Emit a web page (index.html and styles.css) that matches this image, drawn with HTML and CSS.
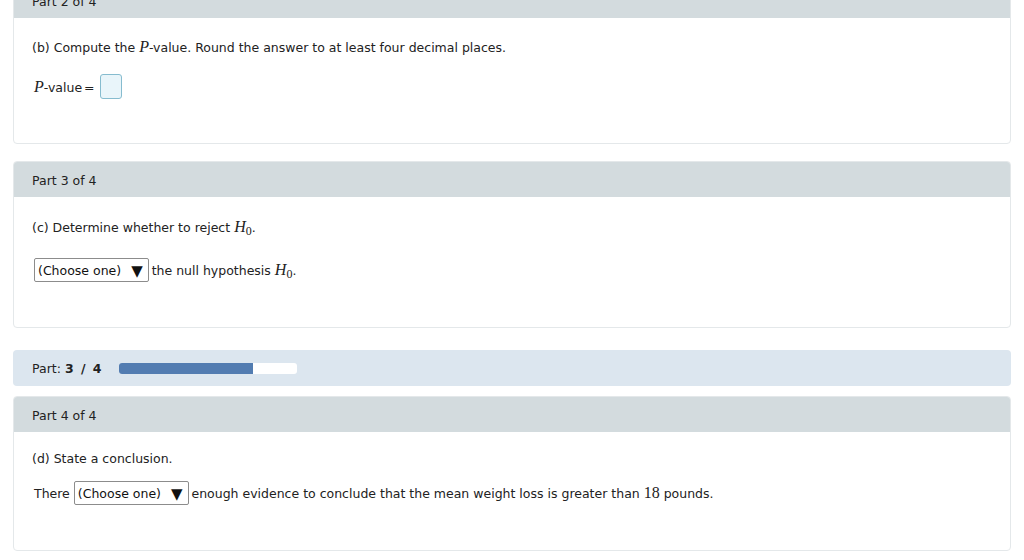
FILE: index.html
```html
<!DOCTYPE html>
<html>
<head>
<meta charset="utf-8">
<link rel="stylesheet" href="styles.css">
</head>
<body>
<div class="page">
  <section class="card card-b">
    <div class="card-head">Part 2 of 4</div>
    <div class="card-body">
      <p class="line">(b) Compute the <i class="m">P</i>-value. Round the answer to at least four decimal places.</p>
      <div class="answer-row">
        <span class="lbl"><i class="m">P</i>-value<span class="eq">=</span></span>
        <span class="input-box"></span>
      </div>
    </div>
  </section>

  <section class="card card-c">
    <div class="card-head">Part 3 of 4</div>
    <div class="card-body">
      <p class="line">(c) Determine whether to reject <i class="m">H</i><sub class="s">0</sub>.</p>
      <div class="answer-row">
        <span class="select">(Choose one)<span class="arrow">&#9660;</span></span>
        <span class="after">the null hypothesis <i class="m">H</i><sub class="s">0</sub>.</span>
      </div>
    </div>
  </section>

  <div class="progress">
    <span class="plabel">Part: <b>3 / 4</b></span>
    <span class="track"><span class="fill" style="width:75%"></span></span>
  </div>

  <section class="card card-d">
    <div class="card-head">Part 4 of 4</div>
    <div class="card-body">
      <p class="line">(d) State a conclusion.</p>
      <div class="answer-row">
        <span>There</span>
        <span class="select">(Choose one)<span class="arrow">&#9660;</span></span>
        <span class="after">enough evidence to conclude that the mean weight loss is greater than <span class="num">18</span> pounds.</span>
      </div>
    </div>
  </section>
</div>
</body>
</html>
```

FILE: styles.css
```css
html, body {
  margin: 0;
  padding: 0;
  background: #ffffff;
}
body {
  font-family: "DejaVu Sans", Verdana, sans-serif;
  font-size: 12.5px;
  color: #222222;
}
.page {
  margin: -18px 13px 0 13px;
  display: flex;
  flex-direction: column;
}
.card {
  border: 1px solid #e4e8ea;
  border-radius: 4px;
  overflow: hidden;
  background: #fff;
}
.card-head {
  height: 36px;
  line-height: 39px;
  background: #d3dbde;
  margin: -1px -1px 0 -1px;
  padding-left: 19px;
}
.card-body {
  padding-left: 18px;
}
.line {
  margin: 0;
  line-height: 20px;
  height: 20px;
}
.m {
  font-family: "Liberation Serif", "Times New Roman", serif;
  font-style: italic;
  font-size: 16px;
}
.s {
  font-family: "Liberation Serif", "Times New Roman", serif;
  font-size: 12px;
  vertical-align: -3px;
  line-height: 0;
}
.num {
  font-family: "Liberation Serif", "Times New Roman", serif;
  font-size: 16px;
}
.answer-row {
  display: flex;
  align-items: center;
}
.lbl {
  margin-left: 2px;
}
.eq {
  margin-left: 2px;
  margin-right: 5px;
}
.input-box {
  width: 20px;
  height: 23px;
  border: 1px solid #86bccf;
  border-radius: 3px;
  background: #e9f5fa;
}
.select {
  display: inline-flex;
  align-items: center;
  height: 21px;
  padding: 1px 5px 0 3px;
  border: 1px solid #8c8c8c;
  border-radius: 2px;
  background: #fff;
  color: #111;
}
.arrow {
  font-size: 15px;
  margin-left: 10px;
}
.after {
  margin-left: 3px;
}
.plabel b {
  word-spacing: 2px;
  letter-spacing: 0.5px;
}
.card-b {
  margin-bottom: 17px;
}
.card-b .card-body {
  padding-top: 19px;
  padding-bottom: 44px;
}
.card-b .answer-row {
  margin-top: 17px;
}
.card-c {
  margin-bottom: 22px;
}
.card-c .card-body {
  padding-top: 20px;
  padding-bottom: 45px;
}
.card-c .answer-row {
  margin-top: 21px;
  margin-left: 2px;
}
.progress {
  height: 36px;
  background: #dce6ef;
  border-radius: 4px;
  display: flex;
  align-items: center;
  padding-left: 19px;
  margin-bottom: 10px;
}
.plabel {
  width: 87px;
  padding-top: 1px;
}
.track {
  width: 178px;
  height: 11px;
  background: #ffffff;
  border-radius: 3px;
  overflow: hidden;
}
.fill {
  display: block;
  height: 100%;
  background: #527cb1;
}
.card-d .card-body {
  padding-top: 17px;
  padding-bottom: 45px;
}
.card-d .answer-row {
  margin-top: 12px;
  margin-left: 2px;
}
.card-d .select {
  margin-left: 4px;
}
```
